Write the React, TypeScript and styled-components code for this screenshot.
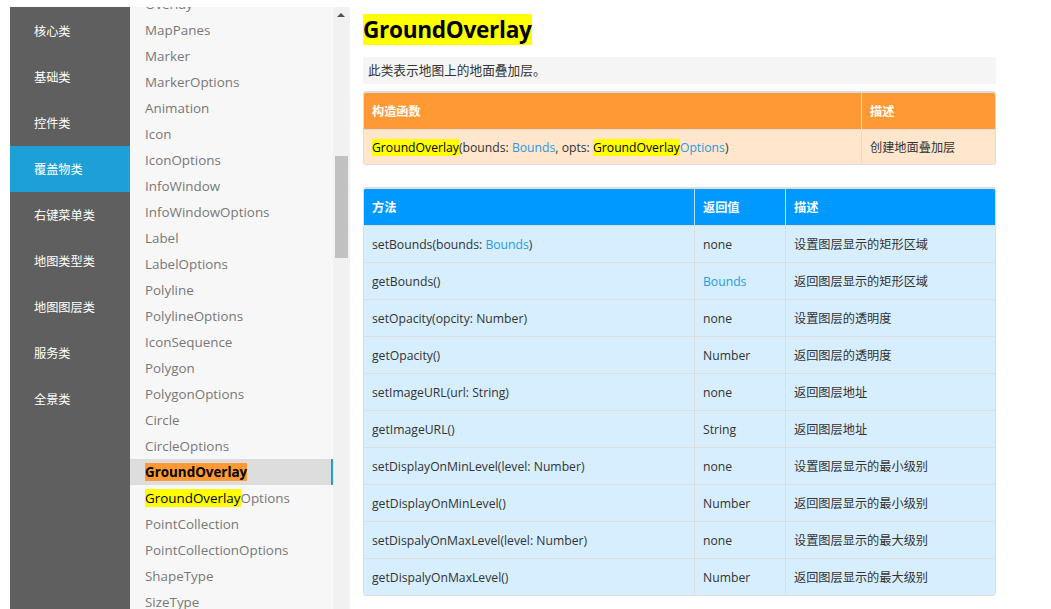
import React from 'react';
import styled, { createGlobalStyle } from 'styled-components';

const GlobalStyle = createGlobalStyle`
  html, body {
    margin: 0;
    padding: 0;
    background: #fff;
    font-family: "Open Sans", "Noto Sans CJK SC", sans-serif;
    overflow: hidden;
  }
`;

const Page = styled.div`
  display: flex;
  height: 609px;
  padding: 7px 0 0 10px;
  box-sizing: border-box;
  overflow: hidden;
`;

const Sidebar = styled.nav`
  width: 120px;
  flex-shrink: 0;
  background: #5e5f5e;
  padding-top: 1px;
`;

const NavItem = styled.div<{ $active?: boolean }>`
  height: 46px;
  line-height: 48px;
  overflow: hidden;
  padding-left: 24px;
  color: #fff;
  font-size: 12.2px;
  background: ${(p) => (p.$active ? '#1e9fd6' : 'transparent')};
`;

const ListPane = styled.div`
  display: flex;
  width: 220px;
  flex-shrink: 0;
  height: 602px;
  background: #f7f7f7;
  overflow: hidden;
`;

const ClassList = styled.ul`
  flex: 1;
  list-style: none;
  margin: -16px 0 0;
  padding: 0;
`;

const ClassItem = styled.li<{ $active?: boolean }>`
  height: 26px;
  line-height: 26px;
  padding-left: 15px;
  font-size: 13.4px;
  color: ${(p) => (p.$active ? '#000' : '#777')};
  font-weight: ${(p) => (p.$active ? 700 : 400)};
  background: ${(p) => (p.$active ? '#dddddd' : 'transparent')};
  border-right: 2px solid ${(p) => (p.$active ? '#1e9fd6' : 'transparent')};
  white-space: nowrap;
`;

const Mark = styled.span<{ $tone?: 'yellow' | 'orange' }>`
  background: ${(p) => (p.$tone === 'orange' ? '#ff9933' : '#ffff00')};
  color: #000;
`;

const ScrollTrack = styled.div`
  position: relative;
  width: 17px;
  flex-shrink: 0;
  background: #f1f1f1;
`;

const ScrollArrow = styled.div`
  position: absolute;
  top: 6px;
  left: 4px;
  width: 0;
  height: 0;
  border-left: 4px solid transparent;
  border-right: 4px solid transparent;
  border-bottom: 4px solid #505050;
`;

const ScrollThumb = styled.div`
  position: absolute;
  top: 149px;
  left: 2px;
  width: 13px;
  height: 102px;
  background: #c1c1c1;
`;

const Main = styled.main`
  width: 633px;
  margin-left: 13px;
  color: #333;
  font-size: 12.2px;
`;

const Title = styled.h1`
  margin: 8px 0 0;
  font-size: 22.6px;
  line-height: 29px;
  font-weight: 700;
  color: #000;
  letter-spacing: -0.3px;
`;

const Intro = styled.p`
  margin: 13px 0 0;
  height: 27px;
  line-height: 27px;
  padding: 0 5px;
  font-size: 12.7px;
  background: #f5f5f5;
`;

const Table = styled.table<{ $gap: number }>`
  width: 100%;
  margin-top: ${(p) => p.$gap}px;
  border-collapse: separate;
  border-spacing: 0;
  border: 1px solid #dddddd;
  border-top-width: 2px;
  border-radius: 3px;
  overflow: hidden;
`;

const HeadCell = styled.th<{ $bg: string; $w?: number }>`
  height: 36px;
  padding: 0 8px;
  text-align: left;
  color: #fff;
  font-weight: 700;
  font-size: 12.2px;
  background: ${(p) => p.$bg};
  width: ${(p) => (p.$w ? `${p.$w}px` : 'auto')};
  box-sizing: border-box;
  border-left: 1px solid rgba(255, 255, 255, 0.7);

  &:first-child {
    border-left: none;
  }
`;

const Cell = styled.td<{ $bg: string; $h: number }>`
  height: ${(p) => p.$h}px;
  padding: 0 8px;
  background: ${(p) => p.$bg};
  border-top: 1px solid #dddddd;
  border-left: 1px solid #dddddd;
  color: #333;
  white-space: nowrap;
  box-sizing: border-box;

  &:first-child {
    border-left: none;
  }
`;

const Link = styled.span`
  color: #2b9ae0;
`;

const navItems = ['核心类', '基础类', '控件类', '覆盖物类', '右键菜单类', '地图类型类', '地图图层类', '服务类', '全景类'];

const classNames = [
  'Overlay', 'MapPanes', 'Marker', 'MarkerOptions', 'Animation', 'Icon', 'IconOptions',
  'InfoWindow', 'InfoWindowOptions', 'Label', 'LabelOptions', 'Polyline', 'PolylineOptions',
  'IconSequence', 'Polygon', 'PolygonOptions', 'Circle', 'CircleOptions', 'GroundOverlay',
  'GroundOverlayOptions', 'PointCollection', 'PointCollectionOptions', 'ShapeType', 'SizeType',
];

type Method = { sig: React.ReactNode; ret: React.ReactNode; desc: string };

const methods: Method[] = [
  { sig: <>setBounds(bounds: <Link>Bounds</Link>)</>, ret: 'none', desc: '设置图层显示的矩形区域' },
  { sig: 'getBounds()', ret: <Link>Bounds</Link>, desc: '返回图层显示的矩形区域' },
  { sig: 'setOpacity(opcity: Number)', ret: 'none', desc: '设置图层的透明度' },
  { sig: 'getOpacity()', ret: 'Number', desc: '返回图层的透明度' },
  { sig: 'setImageURL(url: String)', ret: 'none', desc: '返回图层地址' },
  { sig: 'getImageURL()', ret: 'String', desc: '返回图层地址' },
  { sig: 'setDisplayOnMinLevel(level: Number)', ret: 'none', desc: '设置图层显示的最小级别' },
  { sig: 'getDisplayOnMinLevel()', ret: 'Number', desc: '返回图层显示的最小级别' },
  { sig: 'setDispalyOnMaxLevel(level: Number)', ret: 'none', desc: '设置图层显示的最大级别' },
  { sig: 'getDispalyOnMaxLevel()', ret: 'Number', desc: '返回图层显示的最大级别' },
];

const renderClassName = (name: string) => {
  if (name === 'GroundOverlay') return <Mark $tone="orange">GroundOverlay</Mark>;
  if (name.startsWith('GroundOverlay')) {
    return (
      <>
        <Mark>GroundOverlay</Mark>
        {name.slice('GroundOverlay'.length)}
      </>
    );
  }
  return name;
};

const App: React.FC = () => (
  <>
    <GlobalStyle />
    <Page>
      <Sidebar>
        {navItems.map((item) => (
          <NavItem key={item} $active={item === '覆盖物类'}>
            {item}
          </NavItem>
        ))}
      </Sidebar>

      <ListPane>
        <ClassList>
          {classNames.map((name) => (
            <ClassItem key={name} $active={name === 'GroundOverlay'}>
              {renderClassName(name)}
            </ClassItem>
          ))}
        </ClassList>
        <ScrollTrack>
          <ScrollArrow />
          <ScrollThumb />
        </ScrollTrack>
      </ListPane>

      <Main>
        <Title>
          <Mark>GroundOverlay</Mark>
        </Title>
        <Intro>此类表示地图上的地面叠加层。</Intro>

        <Table $gap={7}>
          <thead>
            <tr>
              <HeadCell $bg="#ff9933" $w={497}>构造函数</HeadCell>
              <HeadCell $bg="#ff9933">描述</HeadCell>
            </tr>
          </thead>
          <tbody>
            <tr>
              <Cell $bg="#ffe6cc" $h={35}>
                <Mark>GroundOverlay</Mark>(bounds: <Link>Bounds</Link>, opts: <Mark>GroundOverlay</Mark>
                <Link>Options</Link>)
              </Cell>
              <Cell $bg="#ffe6cc" $h={35}>创建地面叠加层</Cell>
            </tr>
          </tbody>
        </Table>

        <Table $gap={22}>
          <thead>
            <tr>
              <HeadCell $bg="#0099ff" $w={330}>方法</HeadCell>
              <HeadCell $bg="#0099ff" $w={91}>返回值</HeadCell>
              <HeadCell $bg="#0099ff">描述</HeadCell>
            </tr>
          </thead>
          <tbody>
            {methods.map((m, i) => (
              <tr key={i}>
                <Cell $bg="#d7eefe" $h={37}>{m.sig}</Cell>
                <Cell $bg="#d7eefe" $h={37}>{m.ret}</Cell>
                <Cell $bg="#d7eefe" $h={37}>{m.desc}</Cell>
              </tr>
            ))}
          </tbody>
        </Table>
      </Main>
    </Page>
  </>
);

export default App;
